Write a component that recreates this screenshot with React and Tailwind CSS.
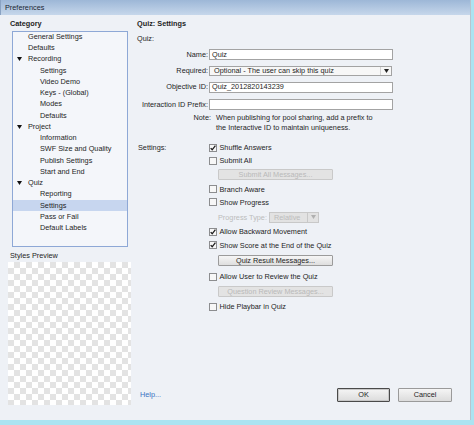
import React from "react";

const tree = [
  { t: "General Settings", l: 1 },
  { t: "Defaults", l: 1 },
  { t: "Recording", l: 0 },
  { t: "Settings", l: 2 },
  { t: "Video Demo", l: 2 },
  { t: "Keys - (Global)", l: 2 },
  { t: "Modes", l: 2 },
  { t: "Defaults", l: 2 },
  { t: "Project", l: 0 },
  { t: "Information", l: 2 },
  { t: "SWF Size and Quality", l: 2 },
  { t: "Publish Settings", l: 2 },
  { t: "Start and End", l: 2 },
  { t: "Quiz", l: 0 },
  { t: "Reporting", l: 2 },
  { t: "Settings", l: 2, sel: true },
  { t: "Pass or Fail", l: 2 },
  { t: "Default Labels", l: 2 },
];

function Tri({ color = "#111" }) {
  return (
    <svg width="5" height="4" viewBox="0 0 5 4">
      <path d="M0 0 H5 L2.5 4 Z" fill={color} />
    </svg>
  );
}

function Check({ checked }) {
  return (
    <svg width="8" height="8" viewBox="0 0 8 8" className="shrink-0">
      <rect x="0.5" y="0.5" width="7" height="7" fill="#f7f7f7" stroke="#8c8d8f" />
      {checked && (
        <path d="M1.7 4.1 L3.2 5.8 L6.4 1.6" fill="none" stroke="#1c1c1c" strokeWidth="1.3" />
      )}
    </svg>
  );
}

function CheckRow({ checked, label, className = "" }) {
  return (
    <div className={"flex items-center h-[13px] " + className}>
      <Check checked={checked} />
      <span className="ml-[2.5px] whitespace-nowrap">{label}</span>
    </div>
  );
}

function Btn({ label, disabled, className = "" }) {
  return (
    <div
      className={
        "ml-[9px] w-[115px] flex items-center justify-center border rounded-[1px] " +
        (disabled
          ? "border-[#c9c9c9] bg-[#e3e3e3] text-[#b9b9b9] "
          : "border-[#9b9b9b] bg-gradient-to-b from-[#f6f6f6] to-[#dedede] text-[#1e1e1e] ") +
        className
      }
    >
      {label}
    </div>
  );
}

export default function App() {
  return (
    <div className="w-[474px] h-[425px] bg-[#abe3f1] font-['Liberation_Sans',Arial,sans-serif] text-[7.3px] leading-none text-[#1e1e1e]">
      <div className="w-[471px] h-[420px] flex flex-col bg-[#eef1f6] border-r border-[#b9c3cf]">
        {/* title bar */}
        <div className="h-[15px] shrink-0 flex items-center pl-[4px] bg-gradient-to-b from-[#9db7d7] to-[#c6d7eb] border-l border-[#8aa3c3] text-[#1b2633]">
          Preferences
        </div>

        <div className="flex flex-1 min-h-0">
          {/* left column */}
          <div className="w-[131px] shrink-0 pl-[10px] flex flex-col">
            <div className="mt-[3.5px] h-[11px] flex items-center font-bold">Category</div>
            <div className="mt-[1.5px] ml-[2px] w-[116px] h-[216px] border border-[#8ea8d6] bg-[#f4f6fa]">
              <div className="-mt-[1px]">
                {tree.map((r, i) => (
                  <div
                    key={i}
                    className={
                      "h-[11.25px] flex items-center whitespace-nowrap " +
                      (r.sel ? "bg-[#c7d6ef] " : "") +
                      (r.l === 0 ? "pl-[4px]" : r.l === 1 ? "pl-[15px]" : "pl-[27px]")
                    }
                  >
                    {r.l === 0 && (
                      <span className="w-[11px] flex items-center">
                        <Tri />
                      </span>
                    )}
                    <span>{r.t}</span>
                  </div>
                ))}
              </div>
            </div>
            <div className="mt-[3px] h-[11px] flex items-center">Styles Preview</div>
            <div className="mt-[1px] -ml-[2px] w-[123px] h-[143px] bg-[conic-gradient(#e3e3e3_25%,#ffffff_0_50%,#e3e3e3_0_75%,#ffffff_0)] bg-[length:12px_12px]" />
          </div>

          {/* right column */}
          <div className="flex-1 pl-[6px] pr-[18px] pb-[18px] flex flex-col">
            <div className="mt-[3.5px] h-[11px] flex items-center font-bold">Quiz: Settings</div>
            <div className="mt-[3.5px] h-[11px] flex items-center">Quiz:</div>

            {/* form rows */}
            <div className="mt-[5px] flex items-center h-[11px]">
              <div className="w-[71px] text-right">Name:</div>
              <div className="ml-[1px] w-[184px] h-[11px] border border-[#a3a3a3] bg-white flex items-center pl-[2px]">Quiz</div>
            </div>
            <div className="mt-[5.5px] flex items-center h-[10.5px]">
              <div className="w-[71px] text-right">Required:</div>
              <div className="ml-[1px] w-[183px] h-[10.5px] border border-[#a3a3a3] bg-[#f7f7f7] flex items-center">
                <span className="flex-1 pl-[4px] whitespace-nowrap">Optional - The user can skip this quiz</span>
                <span className="w-[11px] h-full flex items-center justify-center border-l border-[#d3d3d3]">
                  <Tri color="#222" />
                </span>
              </div>
            </div>
            <div className="mt-[5.5px] flex items-center h-[11px]">
              <div className="w-[71px] text-right">Objective ID:</div>
              <div className="ml-[1px] w-[184px] h-[11px] border border-[#a3a3a3] bg-white flex items-center pl-[2px]">Quiz_2012820143239</div>
            </div>
            <div className="mt-[6.5px] flex items-center h-[11px]">
              <div className="w-[71px] text-right whitespace-nowrap">Interaction ID Prefix:</div>
              <div className="ml-[1px] w-[184px] h-[11px] border border-[#a3a3a3] bg-white" />
            </div>

            {/* note */}
            <div className="mt-[3px] flex leading-[10px]">
              <div className="w-[74px] text-right">Note:</div>
              <div className="ml-[5px]">
                <div className="whitespace-nowrap">When publishing for pool sharing, add a prefix to</div>
                <div className="whitespace-nowrap">the Interactive ID to maintain uniqueness.</div>
              </div>
            </div>

            {/* settings */}
            <div className="mt-[8.3px] flex">
              <div className="w-[72px] pl-[1px] h-[13px] flex items-center">Settings:</div>
              <div className="flex flex-col">
                <CheckRow checked label="Shuffle Answers" />
                <CheckRow label="Submit All" />
                <Btn disabled label="Submit All Messages..." className="mt-[2.2px] h-[11px]" />
                <CheckRow label="Branch Aware" className="mt-[2.5px]" />
                <CheckRow label="Show Progress" />
                <div className="mt-[3px] ml-[9px] h-[11px] flex items-center text-[#bcbcbc]">
                  <span className="w-[51px] whitespace-nowrap">Progress Type:</span>
                  <div className="w-[50px] h-[11px] border border-[#c8c8c8] bg-[#e2e2e2] flex items-center">
                    <span className="flex-1 pl-[4px]">Relative</span>
                    <span className="w-[11px] h-full flex items-center justify-center border-l border-[#c8c8c8]">
                      <Tri color="#b0b0b0" />
                    </span>
                  </div>
                </div>
                <CheckRow checked label="Allow Backward Movement" className="mt-[2.3px]" />
                <CheckRow checked label="Show Score at the End of the Quiz" className="mt-[0.7px]" />
                <Btn label="Quiz Result Messages..." className="mt-[3.5px] h-[11px]" />
                <CheckRow label="Allow User to Review the Quiz" className="mt-[3.8px]" />
                <Btn disabled label="Question Review Messages..." className="mt-[2.7px] h-[11.5px]" />
                <CheckRow label="Hide Playbar in Quiz" className="mt-[3.2px]" />
              </div>
            </div>

            {/* bottom */}
            <div className="mt-auto flex items-center h-[14px]">
              <span className="ml-[3px] text-[#3b74c2]">Help...</span>
              <div className="ml-auto w-[53px] h-[14px] border border-[#4a4a4a] rounded-[1px] bg-gradient-to-b from-[#f5f5f5] to-[#dcdcdc] flex items-center justify-center shadow-[inset_0_0_0_1px_#c7c7c7]">
                OK
              </div>
              <div className="ml-[8px] w-[54px] h-[14px] border border-[#9a9a9a] rounded-[1px] bg-gradient-to-b from-[#f5f5f5] to-[#dcdcdc] flex items-center justify-center">
                Cancel
              </div>
            </div>
          </div>
        </div>
      </div>
    </div>
  );
}
